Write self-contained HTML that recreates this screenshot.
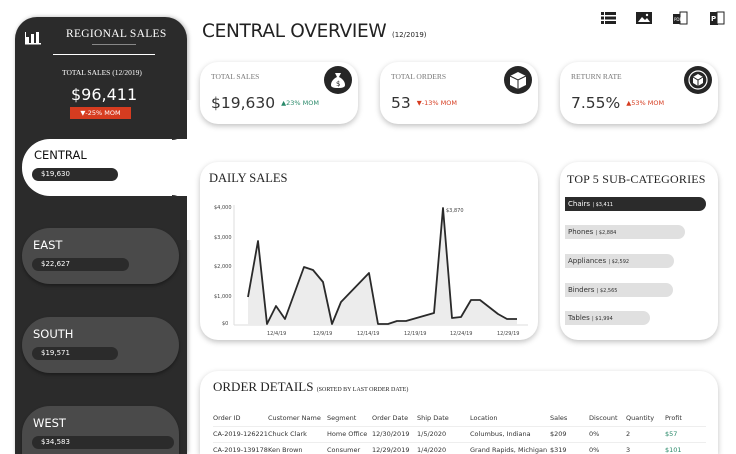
<!DOCTYPE html>
<html><head><meta charset="utf-8"><style>
*{margin:0;padding:0;box-sizing:border-box}
html,body{width:736px;height:454px;overflow:hidden}
body{background:#fff;font-family:"DejaVu Sans","Liberation Sans",sans-serif;position:relative;color:#222}
.a{position:absolute}
.serif{font-family:"Liberation Serif",serif}
.side{left:15px;top:17px;width:172px;height:437px;background:#2b2b2b;border-radius:22px 22px 0 0;box-shadow:1px 0 4px rgba(0,0,0,.3)}
.pill{left:22px;width:157px;height:56px;border-radius:28px;background:#4a4a4a;box-shadow:0 2px 3px rgba(0,0,0,.35)}
.pill .n{position:absolute;left:11px;top:10px;color:#fff;font-size:11.5px}
.pill .b{position:absolute;left:10px;top:30px;height:13px;border-radius:7px;background:#2b2b2b;color:#fff;font-size:7px;line-height:13px;padding-left:9px}
.card{background:#fff;border-radius:18px;box-shadow:0 2px 6px rgba(0,0,0,.25)}
.kl{font-family:"Liberation Serif",serif;font-size:7.5px;color:#777;position:absolute;left:11px;top:10px}
.kv{position:absolute;left:11px;top:32px;font-size:15.5px;color:#333}
.km{font-size:6.5px;margin-left:6px;vertical-align:3px}
.ic{position:absolute;width:28px;height:28px;border-radius:50%;background:#262626;top:4px;right:6px}
.bar{position:absolute;left:565px;height:14px;border-radius:0 8px 8px 0;background:#e0e0e0;font-size:7px;line-height:14px;padding-left:3px;color:#333}
.bar small{font-size:5px}
table{border-collapse:collapse;font-size:6.5px;color:#333;table-layout:fixed;width:493px}
td{height:16px;border-bottom:1px solid #eee;white-space:nowrap;overflow:hidden}
</style></head><body>
<div class="a side"></div>
<svg class="a" style="left:25px;top:30px" width="18" height="15"><rect x="1" y="7" width="3" height="7" fill="#fff"/><rect x="6" y="4" width="3" height="10" fill="#fff"/><rect x="11" y="2" width="3" height="12" fill="#fff"/><rect x="0" y="13" width="16" height="1.5" fill="#fff"/><rect x="0" y="2" width="1" height="12" fill="#fff"/></svg>
<div class="a serif" style="left:66px;top:28px;color:#fff;font-size:11.5px;letter-spacing:.3px">REGIONAL SALES</div>
<div class="a" style="left:92px;top:44px;width:44px;height:1px;background:#888"></div>
<div class="a" style="left:53px;top:54px;width:102px;height:1px;background:#fff"></div>
<div class="a serif" style="left:62px;top:68px;color:#fff;font-size:7.5px">TOTAL SALES (12/2019)</div>
<div class="a" style="left:71px;top:85px;color:#fff;font-size:16px">$96,411</div>
<div class="a" style="left:70px;top:107px;width:61px;height:12px;background:#d63c20;color:#fff;font-size:6.5px;line-height:12px;text-align:center">▼-25% MOM</div>
<div class="a" style="left:22px;top:139px;width:180px;height:57px;background:#fff;border-radius:28px 0 0 28px"></div>
<div class="a" style="left:187px;top:100px;width:20px;height:140px;background:#fff"></div>
<div class="a" style="left:172px;top:125px;width:15px;height:15px;background:#2b2b2b;border-radius:0 0 15px 0"></div>
<div class="a" style="left:172px;top:195px;width:15px;height:15px;background:#2b2b2b;border-radius:0 15px 0 0"></div>
<div class="a" style="left:34px;top:148px;font-size:11.5px;color:#111">CENTRAL</div>
<div class="a" style="left:32px;top:168px;width:86px;height:13px;border-radius:7px;background:#2b2b2b;color:#fff;font-size:7px;line-height:13px;padding-left:9px">$19,630</div>
<div class="a pill" style="top:228px"><div class="n">EAST</div><div class="b" style="width:97px">$22,627</div></div>
<div class="a pill" style="top:317px"><div class="n">SOUTH</div><div class="b" style="width:86px">$19,571</div></div>
<div class="a pill" style="top:406px;height:48px;border-radius:28px 28px 0 0"><div class="n">WEST</div><div class="b" style="width:142px">$34,583</div></div>

<div class="a" style="left:202px;top:21px;font-size:18.5px;color:#222;letter-spacing:-.3px">CENTRAL OVERVIEW <span style="font-size:7px;letter-spacing:0">(12/2019)</span></div>
<svg class="a" style="left:600px;top:11px" width="126" height="14">
<g fill="#222"><rect x="1" y="1" width="3" height="3"/><rect x="5" y="1" width="11" height="3"/><rect x="1" y="5.5" width="3" height="3"/><rect x="5" y="5.5" width="11" height="3"/><rect x="1" y="10" width="3" height="3"/><rect x="5" y="10" width="11" height="3"/>
<rect x="36" y="1" width="16" height="12"/><rect x="73" y="3" width="8" height="10"/><rect x="110" y="1" width="8" height="13"/></g>
<path d="M38 11l4-5 3 3 2-2 3 4z" fill="#fff"/><circle cx="47" cy="4" r="1.2" fill="#fff"/>
<rect x="80" y="1" width="7" height="12" fill="#fff" stroke="#222"/><rect x="117" y="1" width="7" height="12" fill="#fff" stroke="#222"/>
<text x="74" y="10" font-size="4" fill="#fff">PDF</text><text x="111" y="10" font-size="7" fill="#fff" font-weight="bold">P</text>
</svg>

<div class="a card" style="left:200px;top:62px;width:158px;height:62px"><div class="kl">TOTAL SALES</div><div class="kv">$19,630<span class="km" style="color:#2a8a6a">▲23% MOM</span></div><div class="ic"><svg width="28" height="28"><path d="M11 7h6l-2 4c4 2 6 5 6 8 0 2-2 3-7 3s-7-1-7-3c0-3 2-6 6-8z" fill="#fff"/><text x="12" y="20" font-size="7" fill="#222">$</text></svg></div></div>
<div class="a card" style="left:380px;top:62px;width:158px;height:62px"><div class="kl">TOTAL ORDERS</div><div class="kv">53<span class="km" style="color:#d63c20">▼-13% MOM</span></div><div class="ic"><svg width="28" height="28"><path d="M14 6l8 4v9l-8 4-8-4v-9z" fill="#fff"/><path d="M6 10l8 4 8-4M14 14v9" stroke="#222" fill="none"/></svg></div></div>
<div class="a card" style="left:560px;top:62px;width:158px;height:62px"><div class="kl">RETURN RATE</div><div class="kv">7.55%<span class="km" style="color:#d63c20">▲53% MOM</span></div><div class="ic"><svg width="28" height="28"><circle cx="14" cy="14" r="9" fill="none" stroke="#fff" stroke-width="1.2"/><path d="M14 8l5 3v6l-5 3-5-3v-6z" fill="#fff"/><path d="M9 11l5 3 5-3M14 14v6" stroke="#222" fill="none"/></svg></div></div>

<div class="a card" style="left:200px;top:162px;width:338px;height:178px"></div>
<div class="a serif" style="left:209px;top:171px;font-size:12.5px">DAILY SALES</div>
<svg class="a" style="left:200px;top:162px" width="338" height="178" font-family="DejaVu Sans" font-size="5" fill="#444">
<g transform="translate(-200,-162)">
<line x1="234" y1="205" x2="234" y2="325" stroke="#ddd"/><line x1="234" y1="325" x2="528" y2="325" stroke="#ddd"/>
<path d="M248 325L248 297L258 241L267 324L276 306L285 319L304 267L313 270L323 282L332 324L341 302L369 273L378 324L388 324L397 321L406 321L434 313L443 208L452 318L461 317L471 300L480 300L498 314L507 319L517 319L517 325Z" fill="#ececec"/>
<path d="M248 297L258 241L267 324L276 306L285 319L304 267L313 270L323 282L332 324L341 302L369 273L378 324L388 324L397 321L406 321L434 313L443 208L452 318L461 317L471 300L480 300L498 314L507 319L517 319" fill="none" stroke="#2a2a2a" stroke-width="1.8" stroke-linejoin="round"/>
<text x="214" y="209">$4,000</text><text x="214" y="239">$3,000</text><text x="214" y="268">$2,000</text><text x="214" y="298">$1,000</text><text x="222" y="325">$0</text>
<text x="446" y="212">$3,870</text>
<text x="267" y="335">12/4/19</text><text x="313" y="335">12/9/19</text><text x="357" y="335">12/14/19</text><text x="404" y="335">12/19/19</text><text x="450" y="335">12/24/19</text><text x="497" y="335">12/29/19</text>
</g></svg>

<div class="a card" style="left:560px;top:162px;width:158px;height:178px"></div>
<div class="a serif" style="left:567px;top:172px;font-size:12px;letter-spacing:.2px">TOP 5 SUB-CATEGORIES</div>
<div class="bar" style="top:197px;width:141px;background:#2b2b2b;color:#fff">Chairs <small>| $3,411</small></div>
<div class="bar" style="top:225px;width:120px">Phones <small>| $2,884</small></div>
<div class="bar" style="top:254px;width:109px">Appliances <small>| $2,592</small></div>
<div class="bar" style="top:283px;width:108px">Binders <small>| $2,565</small></div>
<div class="bar" style="top:311px;width:85px">Tables <small>| $1,994</small></div>

<div class="a card" style="left:200px;top:371px;width:518px;height:83px;border-radius:18px 18px 0 0"></div>
<div class="a serif" style="left:213px;top:379px;font-size:13px">ORDER DETAILS <span style="font-size:6px">(SORTED BY LAST ORDER DATE)</span></div>
<div class="a" style="left:213px;top:410px;width:493px;height:44px;overflow:hidden">
<table>
<colgroup><col style="width:55px"><col style="width:59px"><col style="width:45px"><col style="width:45px"><col style="width:53px"><col style="width:80px"><col style="width:39px"><col style="width:37px"><col style="width:39px"><col></colgroup>
<tr><td>Order ID</td><td>Customer Name</td><td>Segment</td><td>Order Date</td><td>Ship Date</td><td>Location</td><td>Sales</td><td>Discount</td><td>Quantity</td><td>Profit</td></tr>
<tr><td>CA-2019-126221</td><td>Chuck Clark</td><td>Home Office</td><td>12/30/2019</td><td>1/5/2020</td><td>Columbus, Indiana</td><td>$209</td><td>0%</td><td>2</td><td style="color:#2a8a6a">$57</td></tr>
<tr><td>CA-2019-139178</td><td>Ken Brown</td><td>Consumer</td><td>12/29/2019</td><td>1/4/2020</td><td>Grand Rapids, Michigan</td><td>$319</td><td>0%</td><td>3</td><td style="color:#2a8a6a">$101</td></tr>
</table></div>
</body></html>
